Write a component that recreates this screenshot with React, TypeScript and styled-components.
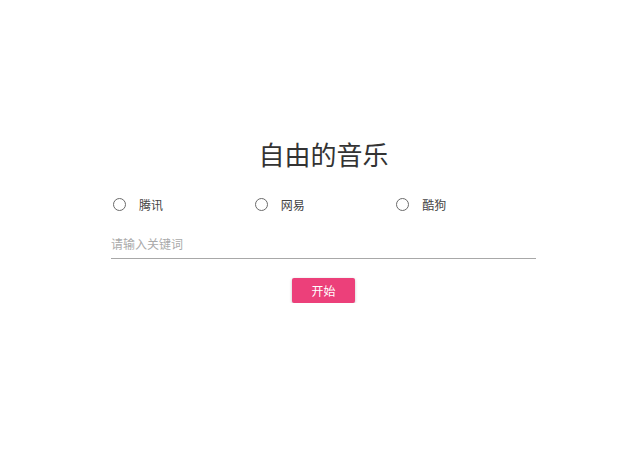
import * as React from "react";
import styled, { createGlobalStyle } from "styled-components";

const GlobalStyle = createGlobalStyle`
	html, body {
		margin: 0;
		padding: 0;
		background: #fff;
	}
	body {
		font-family: "Noto Sans CJK SC", "Noto Sans", sans-serif;
	}
`;

const Page = styled.div`
	display: flex;
	justify-content: center;
	padding: 136px 0 0 7px;
`;
const Panel = styled.div`
	width: 425px;
	display: flex;
	flex-direction: column;
`;
const Title = styled.h1`
	margin: 0;
	text-align: center;
	font-size: 26px;
	font-weight: 400;
	line-height: 36px;
	color: #333;
`;
const RadioGroup = styled.div`
	display: grid;
	grid-template-columns: repeat(3, 1fr);
	margin-top: 20px;
`;
const RadioLabel = styled.label`
	display: flex;
	align-items: center;
	gap: 13px;
	padding-left: 2px;
	height: 24px;
	font-size: 12px;
	color: #444;
	cursor: pointer;
`;
const Circle = styled.span<{ $checked: boolean }>`
	box-sizing: border-box;
	width: 13px;
	height: 13px;
	border-radius: 50%;
	border: 1.5px solid #6a6a6a;
	display: flex;
	align-items: center;
	justify-content: center;
	&::after {
		content: "";
		width: 5px;
		height: 5px;
		border-radius: 50%;
		background: #ec407a;
		display: ${(p) => (p.$checked ? "block" : "none")};
	}
`;
const Input = styled.input`
	margin-top: 19px;
	border: none;
	border-bottom: 1px solid #a8a8a8;
	outline: none;
	padding: 0 0 5px;
	font-family: inherit;
	font-size: 12px;
	line-height: 18px;
	color: #333;
	background: transparent;
	&::placeholder {
		color: #aaa;
	}
`;
const StartBtn = styled.button`
	align-self: center;
	margin-top: 19px;
	width: 63px;
	height: 25px;
	border: none;
	border-radius: 2px;
	background: #ec407a;
	color: #fff;
	font-family: inherit;
	font-size: 12px;
	box-shadow: 0 1px 3px rgba(0, 0, 0, 0.25);
	cursor: pointer;
`;

const sources = ["腾讯", "网易", "酷狗"];

const App: React.FC = () => {
	const [source, setSource] = React.useState<string | null>(null);
	const [keyword, setKeyword] = React.useState("");
	return (
		<>
			<GlobalStyle />
			<Page>
				<Panel>
					<Title>自由的音乐</Title>
					<RadioGroup>
						{sources.map((s) => (
							<RadioLabel key={s} onClick={() => setSource(s)}>
								<Circle $checked={source === s} />
								{s}
							</RadioLabel>
						))}
					</RadioGroup>
					<Input
						placeholder="请输入关键词"
						value={keyword}
						onChange={(e) => setKeyword(e.target.value)}
					/>
					<StartBtn>开始</StartBtn>
				</Panel>
			</Page>
		</>
	);
};

export default App;
